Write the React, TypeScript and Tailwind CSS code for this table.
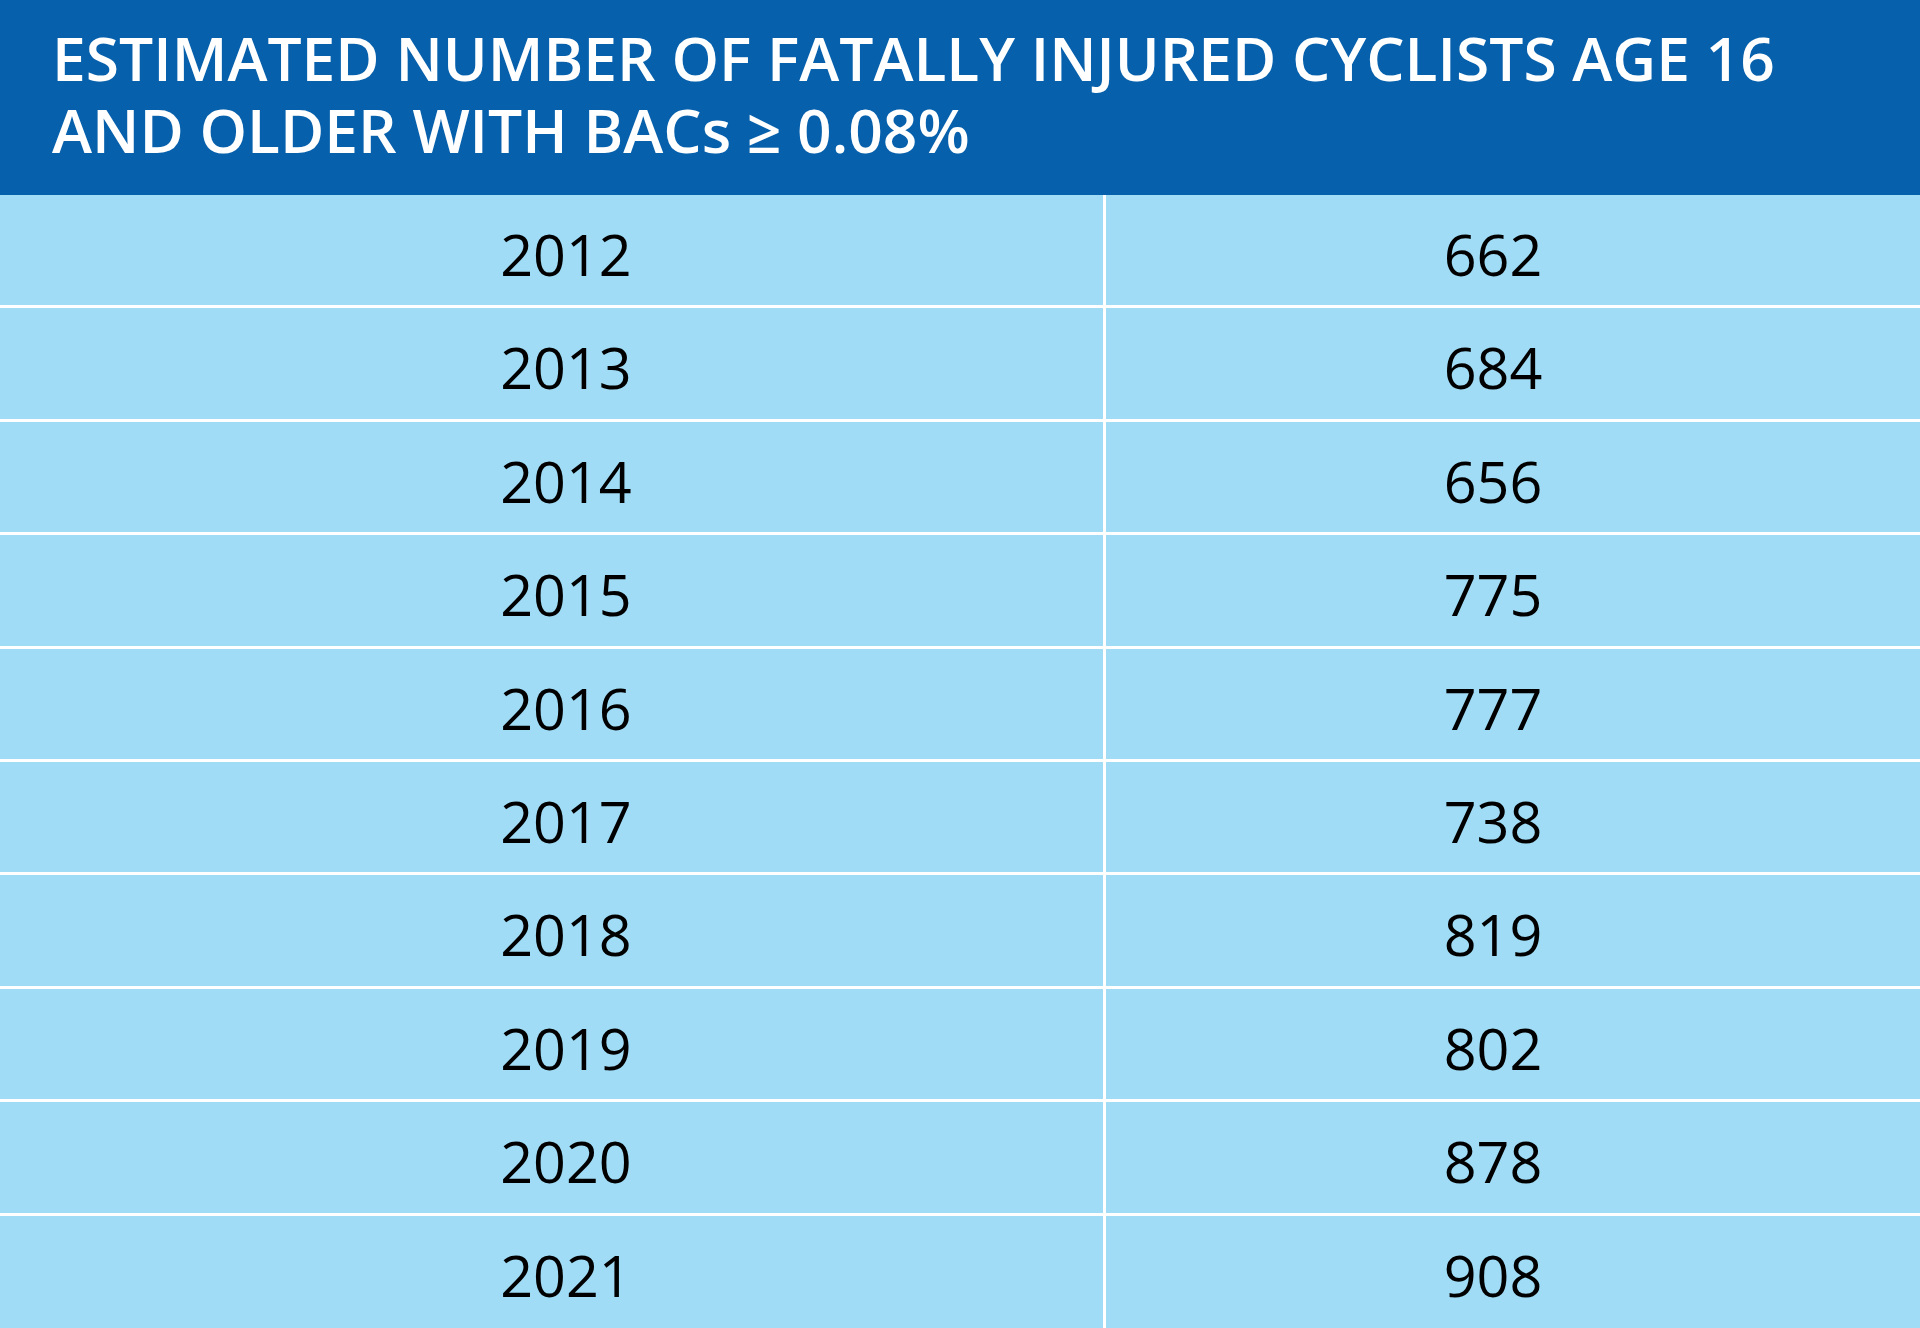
const rows: [string, string][] = [
  ['2012', '662'],
  ['2013', '684'],
  ['2014', '656'],
  ['2015', '775'],
  ['2016', '777'],
  ['2017', '738'],
  ['2018', '819'],
  ['2019', '802'],
  ['2020', '878'],
  ['2021', '908'],
]

export default function App() {
  return (
    <div className="w-[1920px] h-[1328px] overflow-hidden bg-[#a0dcf5] font-['Open_Sans',sans-serif]">
      {/* Title band */}
      <div className="h-[195px] bg-[#0660ac] pl-[52px] pt-[22px] text-white font-semibold text-[60.5px] leading-[72px]">
        ESTIMATED NUMBER OF FATALLY INJURED CYCLISTS AGE 16
        <br />
        AND OLDER WITH BACs ≥ 0.08%
      </div>

      {/* Year / count rows */}
      <div className="flex flex-col">
        {rows.map(([year, count]) => (
          <div
            key={year}
            className="flex h-[113.4px] border-b-[3px] border-white last:border-b-0 text-black text-[57.5px]"
          >
            <div className="w-[1106px] border-r-[3px] border-white flex justify-center pl-[29px] pt-[9px] leading-[100px]">
              {year}
            </div>
            <div className="flex-1 flex justify-center pr-[40px] pt-[9px] leading-[100px]">{count}</div>
          </div>
        ))}
      </div>
    </div>
  )
}
